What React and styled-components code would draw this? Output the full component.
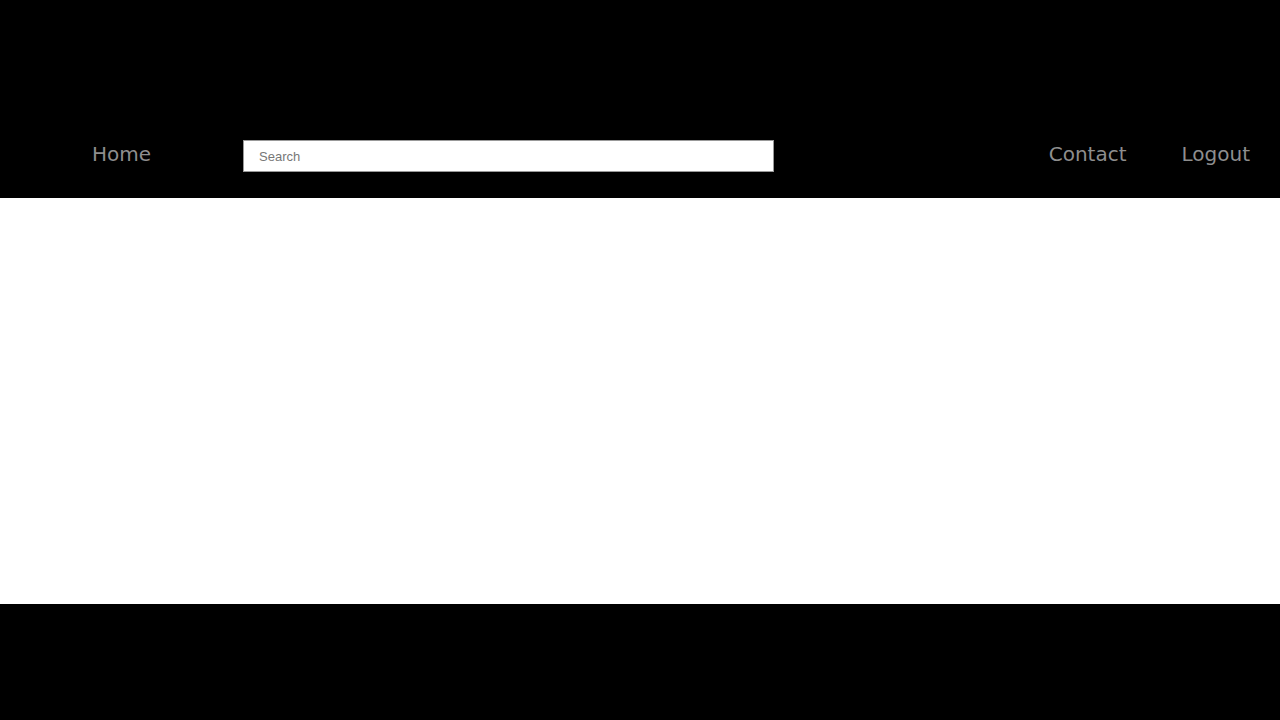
import React from 'react'
import styled, { createGlobalStyle } from 'styled-components'

const GlobalStyle = createGlobalStyle`
    body {
        margin: 0;
        background: #fff;
        font-family: "DejaVu Sans", sans-serif;
    }
`

const Header = styled.header`
    height: 198px;
    background: #000;
    display: flex;
    align-items: flex-end;
    padding-bottom: 26px;
    box-sizing: border-box;
`

const Nav = styled.nav`
    display: flex;
    align-items: center;
    width: 100%;
    height: 32px;
    padding: 0 30px 0 92px;
    box-sizing: border-box;
`

const NavLink = styled.a`
    color: #8e8e8e;
    font-size: 20px;
    line-height: 24px;
    text-decoration: none;
    margin-top: -4px;
    margin-left: ${props => props.gap || 0}px;
    cursor: pointer;
`

const SearchInput = styled.input`
    width: 531px;
    height: 32px;
    margin-left: 92px;
    box-sizing: border-box;
    border: 1px solid #999;
    padding: 0 15px;
    font-family: "Liberation Sans", Arial, sans-serif;
    font-size: 13px;
    color: #333;
    outline: none;

    &::placeholder {
        color: #777;
    }
`

const Spacer = styled.div`
    flex: 1;
`

const Main = styled.main`
    height: 406px;
    background: #fff;
`

const Footer = styled.footer`
    height: 116px;
    background: #000;
`

function App() {
    return (
        <>
            <GlobalStyle />
            <Header>
                <Nav>
                    <NavLink>Home</NavLink>
                    <SearchInput type="text" placeholder="Search" />
                    <Spacer />
                    <NavLink>Contact</NavLink>
                    <NavLink gap={55}>Logout</NavLink>
                </Nav>
            </Header>
            <Main />
            <Footer />
        </>
    )
}

export default App
